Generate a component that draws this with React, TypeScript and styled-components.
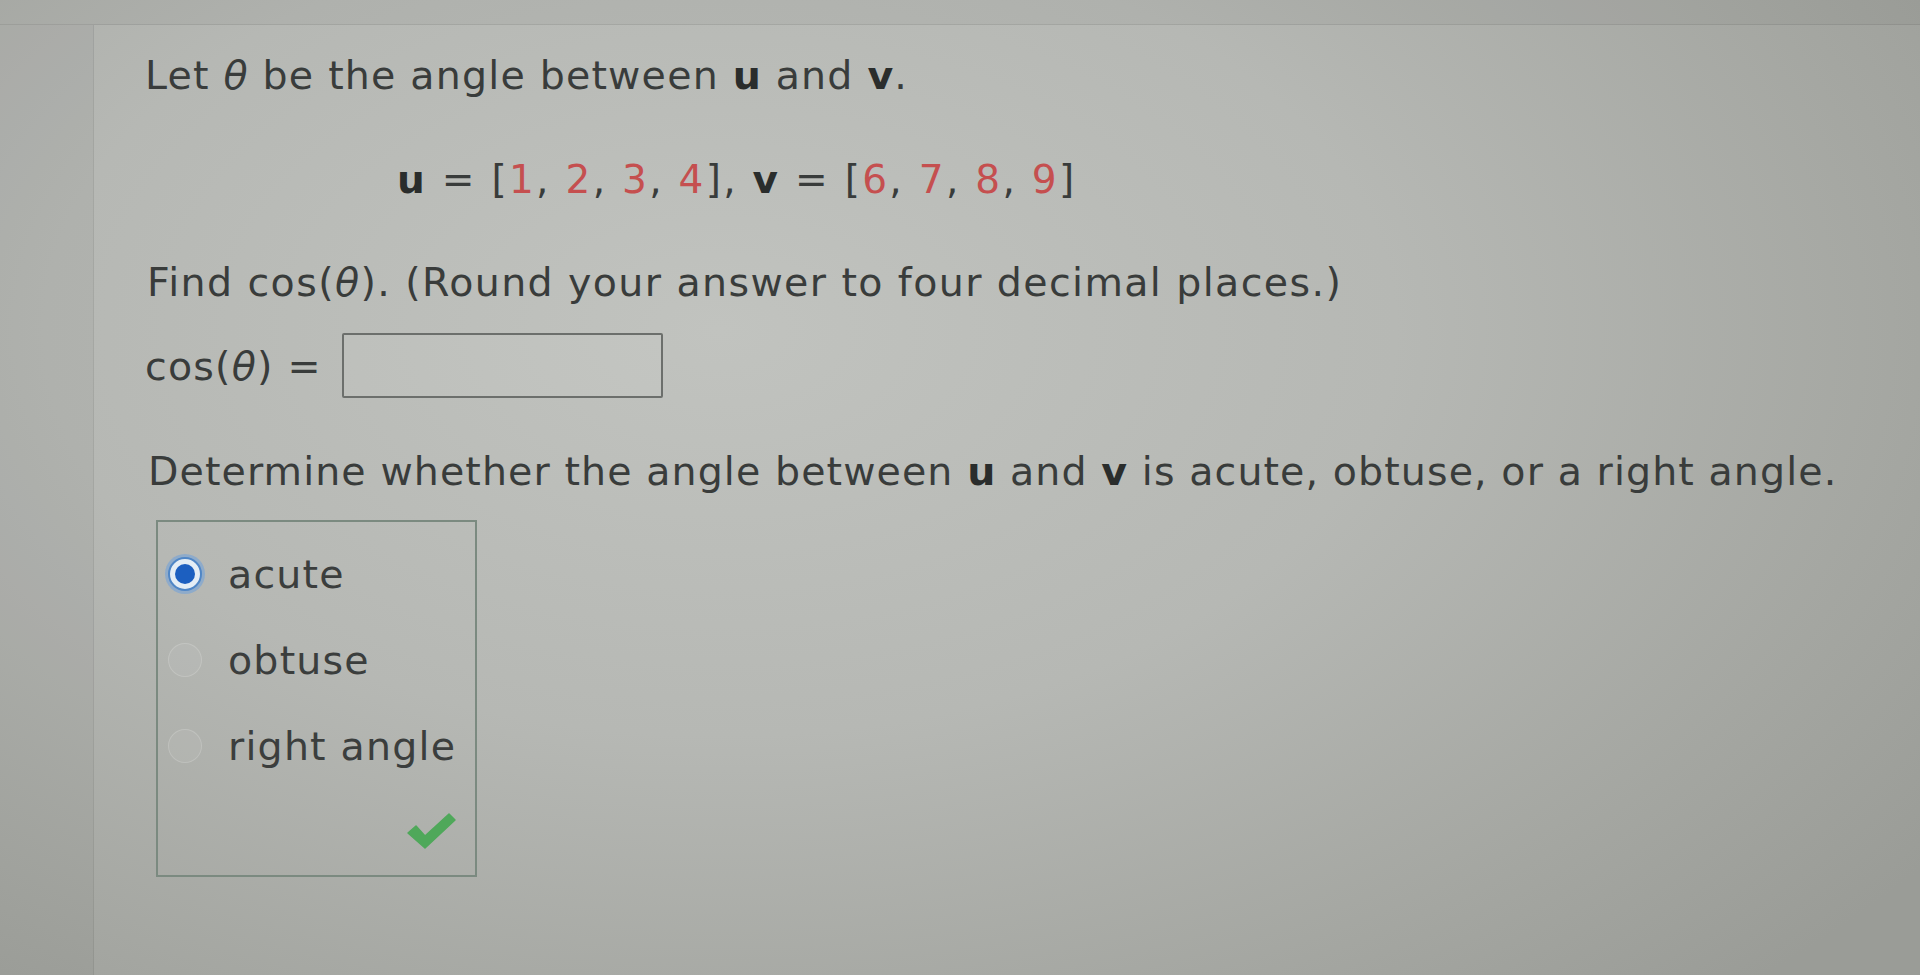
import React from "react";
import styled, { createGlobalStyle, css } from "styled-components";

const GlobalStyle = createGlobalStyle`
  html, body {
    margin: 0;
    padding: 0;
    height: 100%;
  }
  body {
    background: radial-gradient(ellipse 1500px 900px at 720px 330px, #c1c3bf 0%, #b6b8b4 45%, #a4a6a1 80%, #9a9c97 100%);
    font-family: "DejaVu Sans", Verdana, sans-serif;
    color: #393c3b;
    overflow: hidden;
  }
  #root {
    min-height: 100vh;
  }
`;

const Shell = styled.div`
  display: flex;
  flex-direction: column;
  width: 1920px;
  height: 975px;
`;

const TopStrip = styled.div`
  height: 24px;
  flex: none;
  background: rgba(0, 0, 0, 0.035);
  border-bottom: 1px solid rgba(0, 0, 0, 0.07);
`;

const Body = styled.div`
  display: flex;
  flex: 1;
`;

const LeftRail = styled.div`
  width: 93px;
  flex: none;
  background: rgba(60, 62, 58, 0.05);
  border-right: 1px solid rgba(0, 0, 0, 0.06);
`;

const Content = styled.main`
  flex: 1;
  display: flex;
  flex-direction: column;
  align-items: flex-start;
  padding: 31px 0 0 51px;
`;

const textStyle = css`
  font-size: 39.5px;
  line-height: 38px;
  letter-spacing: 1.2px;
  white-space: nowrap;
`;

const Line = styled.p<{ $gap?: number; $indent?: number; $spread?: number }>`
  margin: ${(p) => p.$gap ?? 0}px 0 0 ${(p) => p.$indent ?? 0}px;
  ${textStyle};
  letter-spacing: ${(p) => p.$spread ?? 1.2}px;
`;

const MathLine = styled.p`
  margin: 67px 0 0 252px;
  font-size: 39px;
  line-height: 38px;
  letter-spacing: 2.3px;
  white-space: nowrap;
`;

const Vec = styled.b`
  font-weight: bold;
  color: #2a2d2c;
`;

const Theta = styled.i`
  font-style: italic;
`;

const Num = styled.span`
  color: #c54f4f;
`;

const AnswerRow = styled.div`
  display: flex;
  align-items: center;
  gap: 20px;
  margin-top: 32px;
`;

const AnswerLabel = styled.span`
  ${textStyle};
`;

const AnswerInput = styled.input`
  width: 321px;
  height: 65px;
  box-sizing: border-box;
  border: 2px solid #6c6f6c;
  border-radius: 2px;
  background: rgba(255, 255, 255, 0.05);
  outline: none;
  font: inherit;
`;

const Choices = styled.div`
  margin: 30px 0 0 11px;
  width: 321px;
  box-sizing: border-box;
  border: 2px solid #7b8a80;
  padding: 33px 18px 24px 10px;
  display: flex;
  flex-direction: column;
  gap: 48px;
`;

const Choice = styled.label`
  display: flex;
  align-items: center;
  gap: 26px;
  ${textStyle};
  color: #3b3e3d;
`;

const Radio = styled.span<{ $on?: boolean }>`
  position: relative;
  width: 34px;
  height: 34px;
  flex: none;
  border-radius: 50%;
  box-sizing: border-box;
  ${(p) =>
    p.$on
      ? css`
          border: 2px solid #4f86c6;
          background: #e4edf5;
          box-shadow: 0 0 0 3px rgba(110, 160, 220, 0.55);
          &::after {
            content: "";
            position: absolute;
            inset: 5px;
            border-radius: 50%;
            background: #1c5fc0;
          }
        `
      : css`
          border: 1px solid rgba(255, 255, 255, 0.16);
          background: rgba(255, 255, 255, 0.05);
        `}
`;

const CheckRow = styled.div`
  display: flex;
  justify-content: flex-end;
  margin-top: -2px;
`;

const CheckMark = () => (
  <svg width="52" height="40" viewBox="0 0 52 40" aria-hidden="true">
    <path
      d="M3 22 L11 15 L20 25 L44 3 L50 9 L20 37 Z"
      fill="#4fa85a"
      stroke="#4fa85a"
      strokeWidth="1.5"
      strokeLinejoin="round"
    />
  </svg>
);

const options = [
  { label: "acute", selected: true },
  { label: "obtuse", selected: false },
  { label: "right angle", selected: false },
];

export default function App() {
  return (
    <>
      <GlobalStyle />
      <Shell>
        <TopStrip />
        <Body>
          <LeftRail />
          <Content>
            <Line>
              Let <Theta>θ</Theta> be the angle between <Vec>u</Vec> and <Vec>v</Vec>.
            </Line>
            <MathLine>
              <Vec>u</Vec> = [<Num>1</Num>, <Num>2</Num>, <Num>3</Num>, <Num>4</Num>],{" "}
              <Vec>v</Vec> = [<Num>6</Num>, <Num>7</Num>, <Num>8</Num>, <Num>9</Num>]
            </MathLine>
            <Line $gap={64} $indent={2} $spread={1.4}>
              Find cos(<Theta>θ</Theta>). (Round your answer to four decimal places.)
            </Line>
            <AnswerRow>
              <AnswerLabel>
                cos(<Theta>θ</Theta>) =
              </AnswerLabel>
              <AnswerInput type="text" aria-label="cos theta" />
            </AnswerRow>
            <Line $gap={54} $indent={3} $spread={1.1}>
              Determine whether the angle between <Vec>u</Vec> and <Vec>v</Vec> is acute, obtuse, or a right angle.
            </Line>
            <Choices role="radiogroup">
              {options.map((o) => (
                <Choice key={o.label}>
                  <Radio $on={o.selected} />
                  {o.label}
                </Choice>
              ))}
              <CheckRow>
                <CheckMark />
              </CheckRow>
            </Choices>
          </Content>
        </Body>
      </Shell>
    </>
  );
}
